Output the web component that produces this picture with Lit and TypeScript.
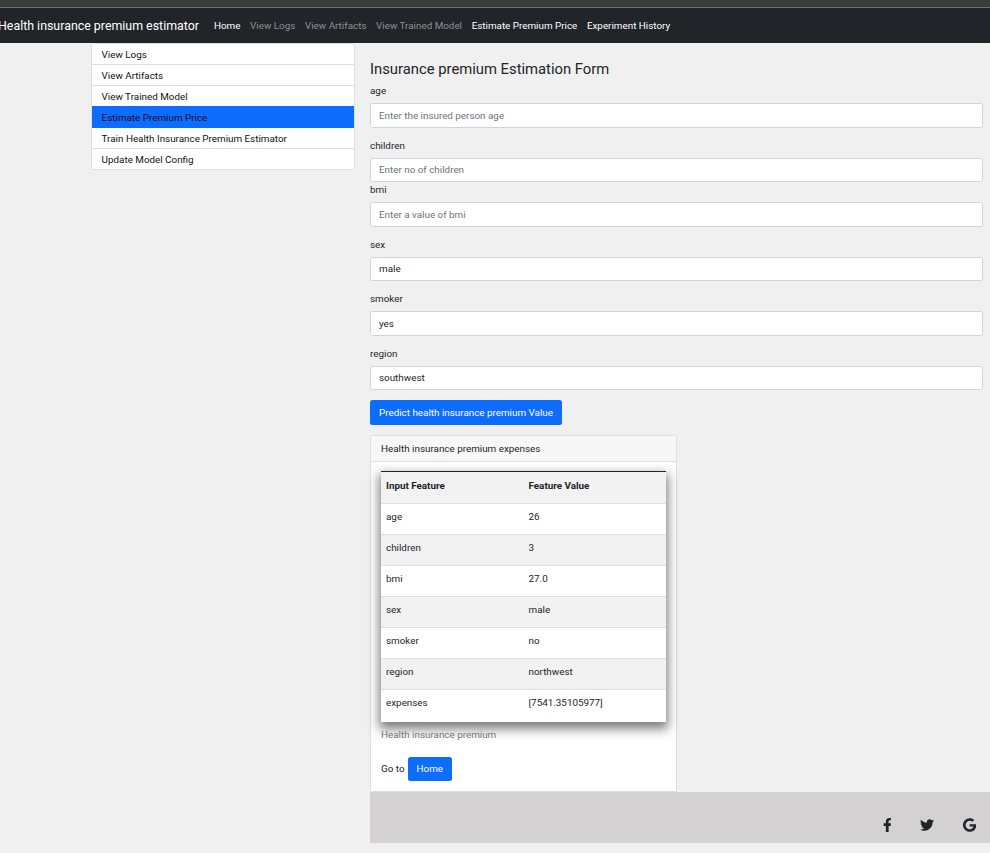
import { LitElement, html, css } from "lit";
import { customElement } from "lit/decorators.js";

const sideItems = ["View Logs", "View Artifacts", "View Trained Model", "Estimate Premium Price", "Train Health Insurance Premium Estimator", "Update Model Config"];
const rows = [["age", "26"], ["children", "3"], ["bmi", "27.0"], ["sex", "male"], ["smoker", "no"], ["region", "northwest"], ["expenses", "[7541.35105977]"]];
const fields = [
  { label: "age", ph: "Enter the insured person age", tight: false },
  { label: "children", ph: "Enter no of children", tight: true },
  { label: "bmi", ph: "Enter a value of bmi", tight: false },
  { label: "sex", val: "male", tight: false },
  { label: "smoker", val: "yes", tight: false },
  { label: "region", val: "southwest", tight: false },
];

@customElement("app-root")
export class AppRoot extends LitElement {
  static styles = css`
    :host { display: block; height: 853px; overflow: hidden; background: #f0f0f0; color: #212529; font-family: Roboto, "Noto Sans", sans-serif; font-size: 9.85px; line-height: 15px; }
    * { box-sizing: border-box; }
    .strip { height: 8px; background: #3b3b3b; border-bottom: 1px solid #6e6e6e; }
    .nav { height: 35px; background: #212529; display: flex; align-items: center; white-space: nowrap; }
    .brand { margin-left: -2px; margin-right: 15px; font-size: 12.4px; color: #fff; }
    .links { display: flex; gap: 9.6px; }
    .links span { color: #fff; }
    .links span.dim { color: #8e9093; }
    .main { display: flex; align-items: flex-start; padding-left: 91px; gap: 15px; }
    .side { width: 264px; flex: none; background: #fff; border: 1px solid #dfdfdf; border-radius: 3px; overflow: hidden; }
    .side div { height: 21px; line-height: 21px; padding-left: 9.6px; border-bottom: 1px solid #dfdfdf; color: #111; }
    .side div:last-child { border-bottom: 0; height: 20px; }
    .side div.active { background: #0d6efd; border-color: #0d6efd; color: #0b0b1a; height: 22px; margin: -1px -1px 0; padding-left: 10.6px; line-height: 23px; }
    .content { width: 613px; padding-top: 15px; }
    h2 { margin: 0 0 3px; font-size: 14.8px; line-height: 22px; font-weight: 400; }
    .group { margin-bottom: 10px; }
    .group.tight { margin-bottom: 0; }
    label { display: block; height: 20px; }
    input { display: block; width: 100%; height: 24.5px; padding: 0 8px; font: inherit; color: #212529; background: #fff; border: 1px solid #ced4da; border-radius: 2.5px; }
    input::placeholder { color: #6c757d; opacity: 1; }
    .btn { display: inline-block; background: #0d6efd; color: #fff; border-radius: 2.5px; padding: 0 9px; height: 25px; line-height: 25px; }
    .card { width: 307px; margin-top: 10px; height: 357px; background: #fff; border: 1px solid #dfdfdf; border-radius: 2.5px 2.5px 0 0; }
    .card-h { height: 26px; line-height: 25px; padding-left: 10px; background: #f7f7f7; border-bottom: 1px solid #dfdfdf; }
    .card-b { padding: 9px 10px 0; }
    table { width: 285px; border-collapse: collapse; box-shadow: 0 5px 10px 2px rgba(0,0,0,.5); border-top: 1.5px solid #212529; }
    td, th { height: 31px; padding: 0 5px 5px; text-align: left; border-bottom: 1px solid #dfdfdf; width: 142px; }
    th { font-weight: 700; height: 32px; padding-bottom: 5px; }
    tr:nth-child(odd) { background: #f2f2f2; }
    tr:nth-child(even) { background: #fff; }
    tr:last-child td { border-bottom: 0; height: 32px; padding-bottom: 7px; }
    .muted { color: #6c757d; margin-top: 5px; height: 25px; line-height: 15px; }
    .goto { display: flex; align-items: center; gap: 3px; margin-top: 5px; }
    .btn.home { height: 24px; line-height: 24px; padding: 0 9px; }
    .footer { height: 51px; margin-right: -7px; background: #d3d1d2; display: flex; justify-content: flex-end; align-items: flex-end; gap: 28.6px; padding: 0 14px 11px 0; }
    svg { display: block; height: 14px; fill: #212529; }
  `;

  render() {
    return html`
      <div class="strip"></div>
      <div class="nav">
        <span class="brand">Health insurance premium estimator</span>
        <div class="links">
          <span>Home</span><span class="dim">View Logs</span><span class="dim">View Artifacts</span><span class="dim">View Trained Model</span><span>Estimate Premium Price</span><span>Experiment History</span>
        </div>
      </div>
      <div class="main">
        <div class="side">
          ${sideItems.map((s) => html`<div class=${s === "Estimate Premium Price" ? "active" : ""}>${s}</div>`)}
        </div>
        <div class="content">
          <h2>Insurance premium Estimation Form</h2>
          ${fields.map((f) => html`
            <div class="group ${f.tight ? "tight" : ""}">
              <label>${f.label}</label>
              <input placeholder=${f.ph ?? ""} .value=${f.val ?? ""} />
            </div>`)}
          <span class="btn">Predict health insurance premium Value</span>
          <div class="card">
            <div class="card-h">Health insurance premium expenses</div>
            <div class="card-b">
              <table>
                <tr><th>Input Feature</th><th>Feature Value</th></tr>
                ${rows.map((r) => html`<tr><td>${r[0]}</td><td>${r[1]}</td></tr>`)}
              </table>
              <div class="muted">Health insurance premium</div>
              <div class="goto"><span>Go to</span><span class="btn home">Home</span></div>
            </div>
          </div>
          <div class="footer">
            <svg viewBox="0 0 320 512"><path d="M279.14 288l14.22-92.66h-88.91v-60.13c0-25.35 12.42-50.06 52.24-50.06h40.42V6.26S260.43 0 225.36 0c-73.22 0-121.08 44.38-121.08 124.72v70.62H22.89V288h81.39v224h100.17V288z"/></svg>
            <svg viewBox="0 0 512 512"><path d="M459.37 151.716c.325 4.548.325 9.097.325 13.645 0 138.72-105.583 298.558-298.558 298.558-59.452 0-114.68-17.219-161.137-47.106 8.447.974 16.568 1.299 25.34 1.299 49.055 0 94.213-16.568 130.274-44.832-46.132-.975-84.792-31.188-98.112-72.772 6.498.974 12.995 1.624 19.818 1.624 9.421 0 18.843-1.3 27.614-3.573-48.081-9.747-84.143-51.98-84.143-102.985v-1.299c13.969 7.797 30.214 12.67 47.431 13.319-28.264-18.843-46.781-51.005-46.781-87.391 0-19.492 5.197-37.36 14.294-52.954 51.655 63.675 129.3 105.258 216.365 109.807-1.624-7.797-2.599-15.918-2.599-24.04 0-57.828 46.782-104.934 104.934-104.934 30.213 0 57.502 12.67 76.67 33.137 23.715-4.548 46.456-13.32 66.599-25.34-7.798 24.366-24.366 44.833-46.132 57.827 21.117-2.273 41.584-8.122 60.426-16.243-14.292 20.791-32.161 39.308-52.628 54.253z"/></svg>
            <svg viewBox="0 0 488 512"><path d="M488 261.8C488 403.3 384.5 504 244 504 110.8 504 0 393.2 0 256S110.8 8 244 8c66.8 0 123 24.5 166.3 64.9l-67.5 64.9C258.5 52.6 94.3 116.6 94.3 256c0 86.5 69.1 156.6 149.7 156.6 93.5 0 128.6-67.1 134.2-101.9H244v-85.3h236.1c2.3 12.7 3.9 24.9 3.9 41.4z"/></svg>
          </div>
        </div>
      </div>
    `;
  }
}
